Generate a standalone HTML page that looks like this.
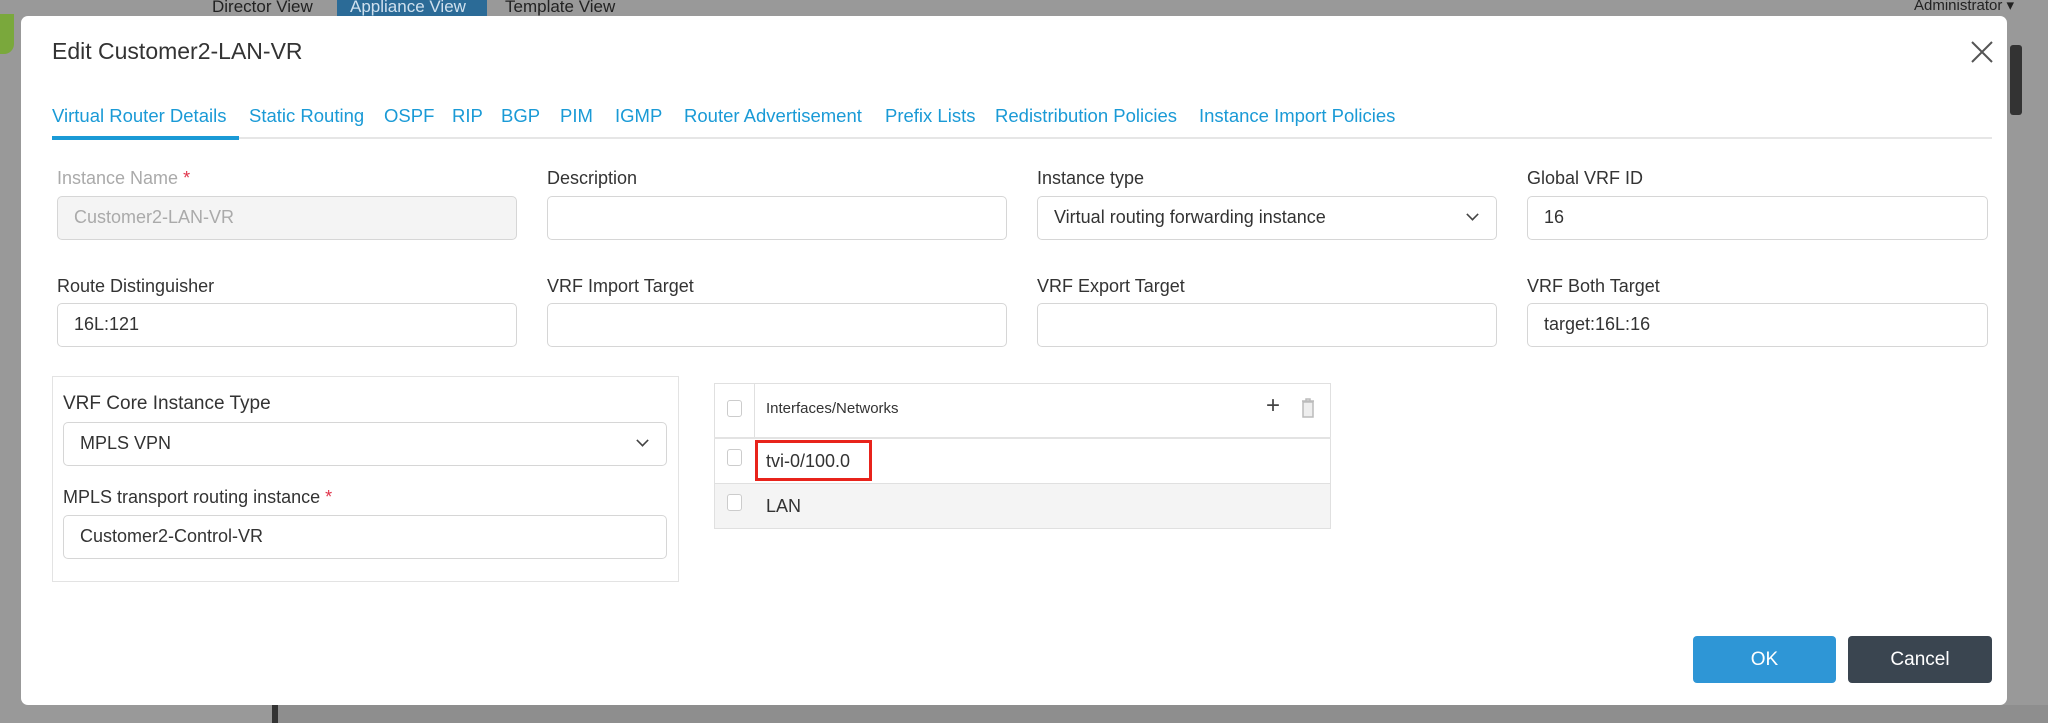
<!DOCTYPE html>
<html><head><meta charset="utf-8"><style>
*{box-sizing:border-box;margin:0;padding:0}
body{width:2048px;height:723px;background:#999;font-family:"Liberation Sans",sans-serif;position:relative;overflow:hidden;color:#333}
.a{position:absolute}
.dlg{left:21px;top:16px;width:1986px;height:689px;background:#fff;border-radius:7px}
.lbl{font-size:18px;color:#333;position:absolute}
.inp{position:absolute;height:44px;border:1.5px solid #d6d6d6;border-radius:5px;background:#fff;font-size:18px;padding-left:16px;line-height:41px;color:#333}
.tab{position:absolute;top:105px;font-size:18.5px;color:#1a9ad6}
.chk{position:absolute;width:15px;height:17px;border:1.5px solid #ccc;border-radius:3px;background:#fff}
.req{color:#e0334a}
.chev{position:absolute;right:18px;top:12px;width:11px;height:11px;border-right:2px solid #444;border-bottom:2px solid #444;transform:rotate(45deg) scale(.8)}
</style></head><body>
<div class="a" style="left:200px;top:0;width:290px;height:16px;font-size:17px;color:#222;line-height:14px;padding-left:12px">Director View</div>
<div class="a" style="left:337px;top:0;width:150px;height:16px;background:#2b6b97"></div>
<div class="a" style="left:350px;top:0;font-size:17px;color:#cfe0ee;line-height:14px">Appliance View</div>
<div class="a" style="left:505px;top:0;font-size:17px;color:#222;line-height:14px">Template View</div>
<div class="a" style="left:1914px;top:-4px;font-size:15px;color:#222">Administrator ▾</div>
<div class="a" style="left:0;top:14px;width:14px;height:40px;background:#7aa83c;border-radius:0 0 10px 0"></div>
<div class="a" style="left:2010px;top:45px;width:12px;height:70px;background:#333;border-radius:3px"></div>
<div class="a" style="left:272px;top:705px;width:6px;height:18px;background:#333"></div>
<div class="a" style="left:278px;top:705px;width:1770px;height:18px;background:#8e8e8e"></div>

<div class="a dlg"></div>
<div class="a" style="left:52px;top:38px;font-size:23px;color:#333">Edit Customer2-LAN-VR</div>
<svg class="a" style="left:1970px;top:40px" width="24" height="24" viewBox="0 0 24 24"><path d="M2 2L22 22M22 2L2 22" stroke="#555" stroke-width="2" fill="none"/></svg>

<div class="tab" style="left:52px">Virtual Router Details</div>
<div class="tab" style="left:249px">Static Routing</div>
<div class="tab" style="left:384px">OSPF</div>
<div class="tab" style="left:452px">RIP</div>
<div class="tab" style="left:501px">BGP</div>
<div class="tab" style="left:560px">PIM</div>
<div class="tab" style="left:615px">IGMP</div>
<div class="tab" style="left:684px">Router Advertisement</div>
<div class="tab" style="left:885px">Prefix Lists</div>
<div class="tab" style="left:995px">Redistribution Policies</div>
<div class="tab" style="left:1199px">Instance Import Policies</div>
<div class="a" style="left:52px;top:137px;width:1940px;height:2px;background:#e6e6e6"></div>
<div class="a" style="left:52px;top:136px;width:187px;height:4px;background:#1a9ad6"></div>

<div class="lbl" style="left:57px;top:168px;color:#aaa">Instance Name <span class="req">*</span></div>
<div class="inp" style="left:57px;top:196px;width:460px;background:#f4f4f4;color:#aaa">Customer2-LAN-VR</div>
<div class="lbl" style="left:547px;top:168px">Description</div>
<div class="inp" style="left:547px;top:196px;width:460px"></div>
<div class="lbl" style="left:1037px;top:168px">Instance type</div>
<div class="inp" style="left:1037px;top:196px;width:460px">Virtual routing forwarding instance<div class="chev"></div></div>
<div class="lbl" style="left:1527px;top:168px">Global VRF ID</div>
<div class="inp" style="left:1527px;top:196px;width:461px">16</div>

<div class="lbl" style="left:57px;top:276px">Route Distinguisher</div>
<div class="inp" style="left:57px;top:303px;width:460px">16L:121</div>
<div class="lbl" style="left:547px;top:276px">VRF Import Target</div>
<div class="inp" style="left:547px;top:303px;width:460px"></div>
<div class="lbl" style="left:1037px;top:276px">VRF Export Target</div>
<div class="inp" style="left:1037px;top:303px;width:460px"></div>
<div class="lbl" style="left:1527px;top:276px">VRF Both Target</div>
<div class="inp" style="left:1527px;top:303px;width:461px">target:16L:16</div>

<div class="a" style="left:52px;top:376px;width:627px;height:206px;border:1.5px solid #e3e3e3"></div>
<div class="lbl" style="left:63px;top:393px;font-size:19px">VRF Core Instance Type</div>
<div class="inp" style="left:63px;top:422px;width:604px">MPLS VPN<div class="chev"></div></div>
<div class="lbl" style="left:63px;top:487px">MPLS transport routing instance <span class="req">*</span></div>
<div class="inp" style="left:63px;top:515px;width:604px">Customer2-Control-VR</div>

<div class="a" style="left:714px;top:383px;width:617px;height:146px;border:1.5px solid #e0e0e0"></div>
<div class="a" style="left:754px;top:383px;width:1px;height:54px;background:#e0e0e0"></div>
<div class="a" style="left:714px;top:437px;width:617px;height:2px;background:#e3e3e3"></div>
<div class="a" style="left:714px;top:483px;width:617px;height:46px;background:#f4f4f4;border:1.5px solid #e0e0e0"></div>
<div class="chk" style="left:727px;top:400px"></div>
<div class="chk" style="left:727px;top:449px"></div>
<div class="chk" style="left:727px;top:494px"></div>
<div class="a" style="left:766px;top:400px;font-size:15px;color:#333">Interfaces/Networks</div>
<div class="a" style="left:1266px;top:394px;font-size:24px;color:#444;line-height:24px">+</div>
<svg class="a" style="left:1301px;top:398px" width="14" height="20" viewBox="0 0 14 20"><path d="M1 3H13M5 3V1H9V3M2 4H12V19H2Z" stroke="#bbb" stroke-width="1.5" fill="#eee"/></svg>
<div class="a" style="left:755px;top:440px;width:117px;height:41px;border:3px solid #e8231b"></div>
<div class="a" style="left:766px;top:451px;font-size:18px;color:#333">tvi-0/100.0</div>
<div class="a" style="left:766px;top:496px;font-size:18px;color:#333">LAN</div>

<div class="a" style="left:1693px;top:636px;width:143px;height:47px;background:#2e96d6;border-radius:4px;color:#fff;font-size:19px;text-align:center;line-height:47px">OK</div>
<div class="a" style="left:1848px;top:636px;width:144px;height:47px;background:#3a4550;border-radius:4px;color:#fff;font-size:19px;text-align:center;line-height:47px">Cancel</div>
</body></html>
